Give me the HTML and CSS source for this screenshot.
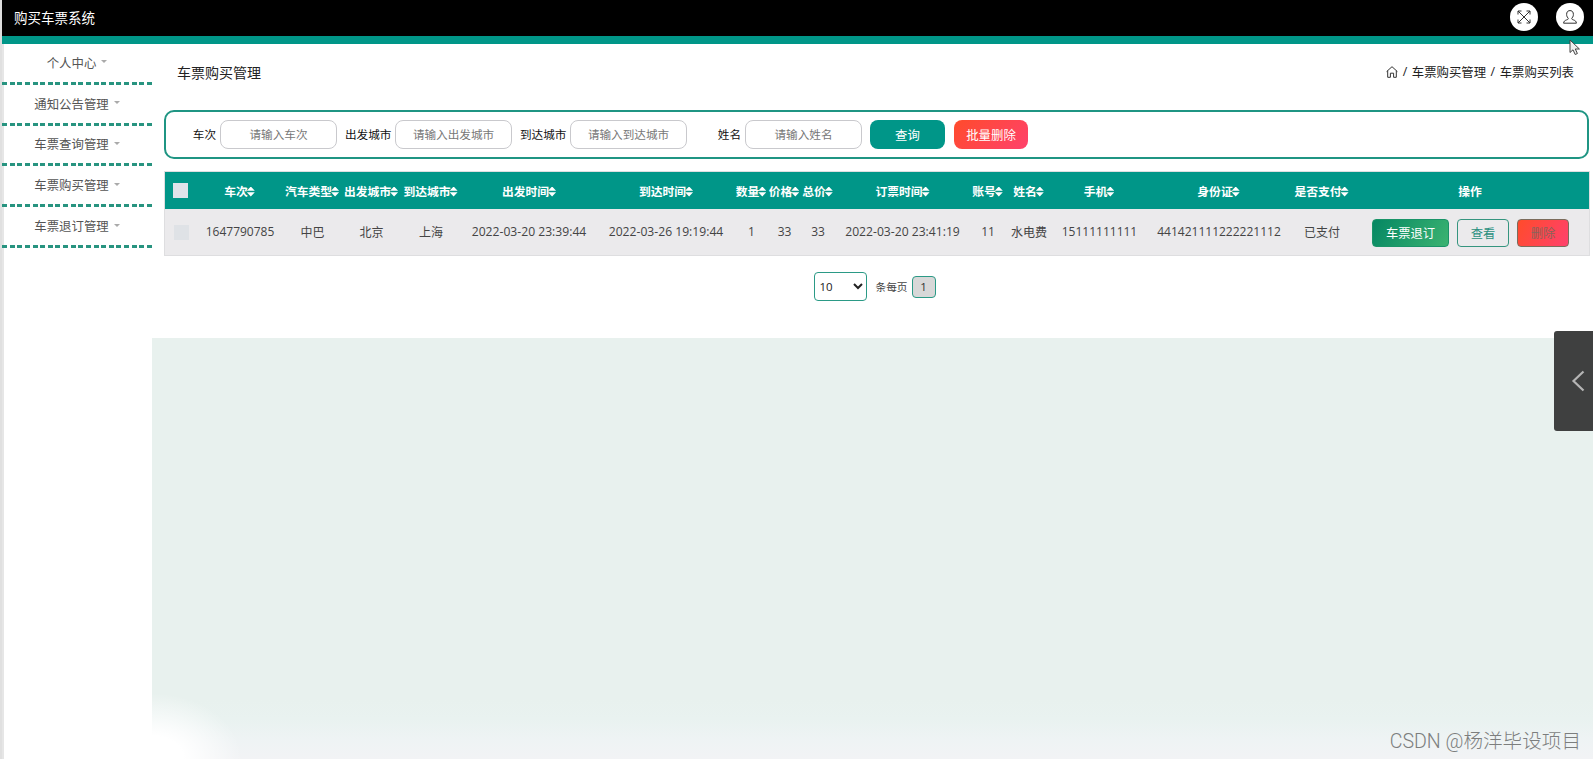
FILE: index.html
```html
<!DOCTYPE html>
<html lang="zh-CN">
<head>
    <meta charset="UTF-8">
    <meta name="viewport" content="width=device-width, initial-scale=1.0">
    <title>购买车票系统</title>
    <link rel="stylesheet" href="styles.css">
</head>
<body>
    <header class="topbar">
        <h1>购买车票系统</h1>
        <div class="top-icons">
            <a href="#" class="round-icon">
                <svg width="14" height="14" viewBox="0 0 14 14">
                    <path d="M1 1L13 13M13 1L1 13M1 4.5V1H4.5M9.5 1H13V4.5M13 9.5V13H9.5M4.5 13H1V9.5"/>
                </svg>
            </a>
            <a href="#" class="round-icon">
                <svg width="14" height="14" viewBox="0 0 14 14">
                    <path d="M5.2 8.2C3.6 6.8 3.4 4.8 3.8 3C4.2 1.3 5.4.6 7 .6S9.8 1.3 10.2 3C10.6 4.8 10.4 6.8 8.8 8.2C8.6 9.3 9.2 9.5 10.4 9.9C12.3 10.6 13.2 11.2 13.4 13.2H.6C.8 11.2 1.7 10.6 3.6 9.9C4.8 9.5 5.4 9.3 5.2 8.2Z"/>
                </svg>
            </a>
        </div>
    </header>

    <div class="layout">
        <nav class="sidebar">
            <a href="#">个人中心<i class="caret"></i></a>
            <a href="#">通知公告管理<i class="caret"></i></a>
            <a href="#">车票查询管理<i class="caret"></i></a>
            <a href="#">车票购买管理<i class="caret"></i></a>
            <a href="#">车票退订管理<i class="caret"></i></a>
        </nav>

        <main class="main">
            <div class="content">
                <div class="page-head">
                    <h2>车票购买管理</h2>
                    <div class="breadcrumb">
                        <svg width="12" height="12" viewBox="0 0 12 12">
                            <path d="M.6 5.6L6 .7L11.4 5.6M1.7 4.8V11.3H4.4V7.2H7.6V11.3H10.3V4.8"/>
                        </svg>
                        <span>/</span><span>车票购买管理</span><span>/</span><span>车票购买列表</span>
                    </div>
                </div>

                <form class="search-bar">
                    <label for="checi">车次</label>
                    <input type="text" id="checi" placeholder="请输入车次">
                    <label for="chufa">出发城市</label>
                    <input type="text" id="chufa" placeholder="请输入出发城市">
                    <label for="daoda">到达城市</label>
                    <input type="text" id="daoda" placeholder="请输入到达城市">
                    <label for="xingming">姓名</label>
                    <input type="text" id="xingming" placeholder="请输入姓名">
                    <button type="button" class="btn-search">查询</button>
                    <button type="button" class="btn-batch">批量删除</button>
                </form>

                <table class="ticket-table">
                    <colgroup>
                        <col class="w-check"><col class="w-train"><col class="w-city"><col class="w-city"><col class="w-city2">
                        <col class="w-time"><col class="w-time"><col class="w-num"><col class="w-num"><col class="w-total">
                        <col class="w-order"><col class="w-total"><col class="w-name"><col class="w-phone"><col class="w-id">
                        <col class="w-city2"><col class="w-action">
                    </colgroup>
                    <thead>
                        <tr>
                            <th><span class="check"></span></th>
                            <th>车次<i class="sort"></i></th>
                            <th>汽车类型<i class="sort"></i></th>
                            <th>出发城市<i class="sort"></i></th>
                            <th>到达城市<i class="sort"></i></th>
                            <th>出发时间<i class="sort"></i></th>
                            <th>到达时间<i class="sort"></i></th>
                            <th>数量<i class="sort"></i></th>
                            <th>价格<i class="sort"></i></th>
                            <th>总价<i class="sort"></i></th>
                            <th>订票时间<i class="sort"></i></th>
                            <th>账号<i class="sort"></i></th>
                            <th>姓名<i class="sort"></i></th>
                            <th>手机<i class="sort"></i></th>
                            <th>身份证<i class="sort"></i></th>
                            <th>是否支付<i class="sort"></i></th>
                            <th>操作</th>
                        </tr>
                    </thead>
                    <tbody>
                        <tr>
                            <td><span class="check"></span></td>
                            <td>1647790785</td>
                            <td>中巴</td>
                            <td>北京</td>
                            <td>上海</td>
                            <td class="time">2022-03-20 23:39:44</td>
                            <td class="time">2022-03-26 19:19:44</td>
                            <td>1</td>
                            <td>33</td>
                            <td>33</td>
                            <td class="time">2022-03-20 23:41:19</td>
                            <td>11</td>
                            <td>水电费</td>
                            <td>15111111111</td>
                            <td>441421111222221112</td>
                            <td>已支付</td>
                            <td>
                                <div class="actions">
                                    <button class="btn-refund">车票退订</button>
                                    <button class="btn-view">查看</button>
                                    <button class="btn-delete">删除</button>
                                </div>
                            </td>
                        </tr>
                    </tbody>
                </table>

                <div class="pagination">
                    <select>
                        <option>10</option>
                        <option>20</option>
                        <option>50</option>
                    </select>
                    <span>条每页</span>
                    <button>1</button>
                </div>
            </div>
        </main>
    </div>

    <div class="drawer-toggle">
        <svg width="14" height="22" viewBox="0 0 14 22">
            <path d="M12.5 1.5L2.5 11L12.5 20.5"/>
        </svg>
    </div>

    <svg class="cursor" width="12" height="18" viewBox="0 0 12 18">
        <path d="M1 1V13.5L4 10.8L6.2 15.5L8.4 14.5L6.3 10H10.4Z"/>
    </svg>

    <div class="watermark">CSDN @杨洋毕设项目</div>
</body>
</html>
```
FILE: styles.css
```css
* {
    box-sizing: border-box;
}

body {
    margin: 0;
    height: 759px;
    overflow: hidden;
    position: relative;
    display: flex;
    flex-direction: column;
    background: #fff;
    color: #444;
    font-family: "Open Sans", "Noto Sans CJK SC", sans-serif;
    font-size: 12px;
}

button, input, select {
    font-family: inherit;
    padding: 0;
}

a {
    color: inherit;
    text-decoration: none;
}

svg {
    fill: none;
    stroke: #333;
    stroke-width: 1;
}

.topbar {
    height: 44px;
    flex: none;
    display: flex;
    align-items: center;
    justify-content: space-between;
    margin-left: 2px;
    padding: 0 9px 2px 12px;
    background: #000;
    border-bottom: 8px solid #009688;
    box-shadow: -2px 0 0 #ddd;
}

.topbar h1 {
    margin: 0;
    color: #fff;
    font-size: 13.5px;
    font-weight: 400;
}

.top-icons {
    display: flex;
    gap: 18px;
}

.round-icon {
    width: 28px;
    height: 28px;
    border-radius: 50%;
    background: #fff;
    display: flex;
    align-items: center;
    justify-content: center;
}

.layout {
    flex: 1;
    display: flex;
    border-left: 2px solid #e0e0e0;
}

.sidebar {
    width: 150px;
    flex: none;
    border-left: 2px solid #e6e6e6;
}

.sidebar a {
    height: 40.8px;
    padding: 0 0 3px;
    display: flex;
    align-items: center;
    justify-content: center;
    color: #555;
    font-size: 12.4px;
    margin-left: -2px;
    background: repeating-linear-gradient(to right, #289480 0, #289480 5px, transparent 5px, transparent 7.63px) left bottom / 100% 3px no-repeat;
}

.caret {
    margin: -2px 0 0 5px;
    border: 3px solid transparent;
    border-top-color: #aaa;
    border-bottom: 0;
}

.main {
    flex: 1;
    background:
        radial-gradient(ellipse 90px 66px at 0 100%, #fff 35%, rgba(255, 255, 255, 0) 100%),
        linear-gradient(to bottom, #e8f1ee 656px, #e9f2f0 675px, #eef3f4 695px, #f2f3f5 715px);
}

.content {
    height: 294px;
    padding: 0 4px 0 13px;
    background: #fff;
}

.page-head {
    height: 66px;
    padding: 0 15px 11px 12px;
    display: flex;
    align-items: center;
    justify-content: space-between;
    color: #222;
}

.page-head h2 {
    margin: 0;
    font-size: 14px;
    font-weight: 400;
}

.breadcrumb {
    display: flex;
    align-items: center;
    gap: 4.5px;
    font-size: 12.4px;
}

.search-bar {
    height: 49px;
    display: flex;
    align-items: center;
    margin-left: -1px;
    padding-left: 4px;
    border: 2px solid #1f9583;
    border-radius: 10px;
}

.search-bar label {
    width: 46px;
    margin-right: 4px;
    padding-bottom: 1px;
    text-align: right;
    white-space: nowrap;
    font-size: 11.6px;
    color: #111;
}

.search-bar input {
    width: 117px;
    height: 29px;
    margin-right: 8px;
    border: 1px solid #c9c9cd;
    border-radius: 8px;
    text-align: center;
    font-size: 11.6px;
}

.search-bar input::placeholder {
    color: #777;
}

.search-bar button {
    height: 29px;
    border: none;
    border-radius: 8px;
    color: #fff;
    font-size: 12.4px;
}

.search-bar .btn-search {
    width: 75px;
    margin-right: 9px;
    background: #009688;
}

.search-bar .btn-batch {
    width: 74px;
    background: linear-gradient(135deg, #ff4b2b, #ff416c);
}

.ticket-table {
    width: 1424px;
    margin-top: 13px;
    table-layout: fixed;
    border-collapse: separate;
    border-spacing: 0;
    text-align: center;
    white-space: nowrap;
    box-shadow: 0 0 0 1px #dedee0;
}

.ticket-table th,
.ticket-table td {
    padding: 0;
}

.ticket-table th {
    height: 37px;
    padding: 0 1px 1px 0;
    background: #009688;
    color: #fff;
    font-size: 11.8px;
}

.ticket-table td {
    height: 46px;
    padding-bottom: 1px;
    background: #ebeaec;
}

.ticket-table .time {
    padding-right: 1px;
    font-size: 12.15px;
}

.w-check { width: 32px; }
.w-train { width: 86px; }
.w-city { width: 59px; }
.w-city2 { width: 60px; }
.w-time { width: 137px; }
.w-num { width: 33px; }
.w-total { width: 34px; }
.w-order { width: 136px; }
.w-name { width: 48px; }
.w-phone { width: 93px; }
.w-id { width: 146px; }
.w-action { width: 237px; }

.check {
    display: block;
    width: 15px;
    height: 15px;
    margin: 1px auto 0;
    background: #dfe3ea;
}

td .check {
    background: #dfe2e6;
}

/* up and down triangles after a sortable heading */
.sort {
    display: inline-block;
    width: 8px;
    height: 10px;
    margin-left: -1px;
    vertical-align: -1px;
    background: #fff;
    clip-path: polygon(50% 0, 100% 42%, 0 42%, 0 58%, 100% 58%, 50% 100%, 0 58%, 0 42%);
}

.actions {
    display: flex;
    justify-content: center;
    gap: 8px;
    padding-top: 2px;
}

.actions button {
    width: 52px;
    height: 28px;
    border: 1px solid #35957f;
    border-radius: 4px;
    background: transparent;
    color: #2a9080;
    font-size: 12.3px;
}

.actions .btn-refund {
    width: 77px;
    border-color: #1a9468;
    background: linear-gradient(120deg, #058763, #3cb371);
    color: #fff;
}

.actions .btn-delete {
    border-color: #7c6c5c;
    background: linear-gradient(120deg, #ff4b2b, #ff416c);
    color: #8a625a;
}

.pagination {
    display: flex;
    align-items: center;
    justify-content: center;
    margin-top: 17px;
    padding-right: 4px;
    font-size: 10.7px;
}

.pagination select {
    width: 53px;
    height: 29px;
    margin-right: 8px;
    border: 1px solid #2b9a86;
    border-radius: 4px;
    background: #fff;
    color: #222;
    font-size: 11.5px;
}

.pagination button {
    width: 24px;
    height: 22px;
    margin-left: 4px;
    border: 1px solid #2b9a86;
    border-radius: 4px;
    background: #d8d8d8;
    color: #333;
    font-size: 11.5px;
}

.drawer-toggle {
    position: absolute;
    top: 331px;
    right: 0;
    width: 39px;
    height: 100px;
    padding-left: 9px;
    display: flex;
    align-items: center;
    justify-content: center;
    border-radius: 3px 0 0 3px;
    background: #3f4040;
}

.drawer-toggle svg {
    stroke: #b5b5b5;
    stroke-width: 2.2;
}

.cursor {
    position: absolute;
    top: 39px;
    left: 1569px;
    fill: #eee;
    stroke: #444;
}

.watermark {
    position: absolute;
    right: 12px;
    bottom: 5px;
    font-family: Roboto, "Noto Sans CJK SC", sans-serif;
    font-size: 19.6px;
    font-weight: 300;
    color: #7c7e7e;
}
```
